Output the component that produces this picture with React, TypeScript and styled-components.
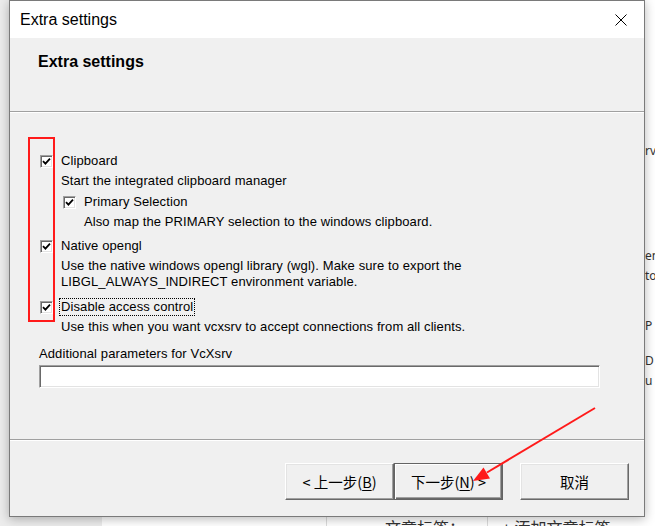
import styled, { createGlobalStyle } from "styled-components";

const GlobalStyle = createGlobalStyle`
  html, body {
    margin: 0;
    padding: 0;
  }
  body {
    font-family: "Liberation Sans", Arial, sans-serif;
    background: #ffffff;
  }
`;

const Root = styled.div`
  position: relative;
  width: 655px;
  height: 526px;
  overflow: hidden;
`;

// the web page behind the dialog
const BackPage = styled.div`
  display: grid;
  grid-template-columns: 102px 1fr;
  grid-template-rows: 517px 9px;
  height: 100%;
`;

const SideCell = styled.div`
  background: #ececec;
`;

const PageCell = styled.div`
  background: #ffffff;
  overflow: hidden;
  display: flex;
  flex-direction: column;
  padding-left: 543px;
  font-family: "Noto Sans", sans-serif;
  font-size: 12px;
  color: #333;
  white-space: nowrap;
`;

const Fragment = styled.div<{ $top: number }>`
  margin-top: ${(p) => p.$top}px;
  line-height: 18px;
`;

const TagRow = styled.div`
  background: #ffffff;
  display: flex;
  font-family: "Noto Sans CJK SC", sans-serif;
  font-size: 16px;
  line-height: 16px;
  color: #333;
  white-space: nowrap;
  overflow: hidden;
`;

const TagCell = styled.div<{ $width: number; $pad: number; $line?: boolean }>`
  width: ${(p) => p.$width}px;
  flex-shrink: 0;
  padding-left: ${(p) => p.$pad}px;
  padding-top: 2px;
  border-left: 1px solid ${(p) => (p.$line ? "#dcdcdc" : "transparent")};
  box-sizing: border-box;
`;

const Dialog = styled.div`
  position: absolute;
  left: 9px;
  top: 0;
  width: 636px;
  height: 517px;
  box-sizing: border-box;
  border: 1px solid #7a7a7a;
  background: #f0f0f0;
  display: flex;
  flex-direction: column;
  box-shadow: 0 2px 10px rgba(0, 0, 0, 0.28);
`;

const TitleBar = styled.div`
  height: 37px;
  flex-shrink: 0;
  background: #ffffff;
  display: flex;
  align-items: center;
  justify-content: space-between;
  padding-left: 10px;
  font-size: 16px;
  color: #000;
`;

const CloseButton = styled.div`
  width: 46px;
  height: 37px;
  display: flex;
  align-items: center;
  justify-content: center;
`;

const Header = styled.div`
  height: 73px;
  flex-shrink: 0;
  box-sizing: border-box;
  padding: 15px 0 0 28px;
  font-size: 16px;
  font-weight: bold;
  line-height: 18px;
  color: #000;
`;

const Separator = styled.div`
  flex-shrink: 0;
  border-top: 1px solid #a0a0a0;
  border-bottom: 1px solid #ffffff;
`;

const Content = styled.div`
  flex: 1;
  display: flex;
  flex-direction: column;
  padding: 38px 0 0 30px;
  font-size: 13px;
  letter-spacing: 0.1px;
  color: #000;
`;

const Options = styled.div`
  display: flex;
  flex-direction: column;
  gap: 6px;
`;

const Option = styled.div<{ $nested?: boolean; $space?: number }>`
  display: flex;
  flex-direction: column;
  margin-left: ${(p) => (p.$nested ? 23 : 0)}px;
  margin-top: ${(p) => (p.$nested ? 3 : p.$space ?? 0)}px;
`;

const CheckRow = styled.div`
  display: flex;
  align-items: center;
  height: 20px;
  gap: 8px;
`;

const Box = styled.span`
  width: 13px;
  height: 13px;
  flex-shrink: 0;
  box-sizing: border-box;
  background: #ffffff;
  border: 1px solid;
  border-color: #a0a0a0 #ffffff #ffffff #a0a0a0;
  box-shadow: inset 1px 1px 0 #696969, inset -1px -1px 0 #e3e3e3;
  display: flex;
  align-items: center;
  justify-content: center;
`;

const Label = styled.span<{ $focused?: boolean }>`
  line-height: 16px;
  padding: 0 1px;
  margin-left: -1px;
  outline: ${(p) => (p.$focused ? "1px dotted #000" : "none")};
`;

const Desc = styled.div`
  padding-left: 21px;
  margin-top: 2px;
  line-height: 16px;
  white-space: nowrap;
`;

const ParamsLabel = styled.div`
  margin: 11px 0 0 -1px;
  line-height: 16px;
`;

const ParamsInput = styled.div`
  margin: 3px 0 0 -1px;
  width: 561px;
  height: 23px;
  box-sizing: border-box;
  background: #ffffff;
  border: 1px solid;
  border-color: #a0a0a0 #ffffff #ffffff #a0a0a0;
  box-shadow: inset 1px 1px 0 #696969, inset -1px -1px 0 #e3e3e3;
`;

const ButtonRow = styled.div`
  flex-shrink: 0;
  display: flex;
  justify-content: flex-end;
  padding: 22px 15px 16px 0;
`;

const Button = styled.div<{ $default?: boolean; $gap?: number }>`
  width: 109px;
  height: 37px;
  box-sizing: border-box;
  margin-left: ${(p) => p.$gap ?? 0}px;
  display: flex;
  align-items: center;
  justify-content: center;
  background: #f0f0f0;
  font-family: "Noto Sans CJK SC", "Liberation Sans", sans-serif;
  font-size: 14.5px;
  color: #000;
  white-space: pre;
  border: 1px solid;
  border-color: ${(p) =>
    p.$default ? "#646464" : "#ffffff #696969 #696969 #ffffff"};
  box-shadow: ${(p) =>
    p.$default
      ? "inset 1px 1px 0 #ffffff, inset -1px -1px 0 #696969, inset -2px -2px 0 #a0a0a0"
      : "inset -1px -1px 0 #a0a0a0, inset 1px 1px 0 #e3e3e3"};

  u {
    text-underline-offset: 2px;
  }
`;

const Highlight = styled.div`
  position: absolute;
  left: 18px;
  top: 136px;
  width: 27px;
  height: 185px;
  box-sizing: border-box;
  border: 2px solid #ff1a1a;
  pointer-events: none;
`;

const ArrowLayer = styled.svg`
  position: absolute;
  left: 0;
  top: 0;
  pointer-events: none;
`;

const Check = () => (
  <svg width="9" height="9" viewBox="0 0 9 9">
    <path d="M1 4.2 L3.4 6.6 L8 1.6" fill="none" stroke="#000" strokeWidth="1.8" />
  </svg>
);

const CheckItem = ({
  label,
  focused,
}: {
  label: string;
  focused?: boolean;
}) => (
  <CheckRow>
    <Box>
      <Check />
    </Box>
    <Label $focused={focused}>{label}</Label>
  </CheckRow>
);

const App = () => {
  return (
    <Root>
      <GlobalStyle />
      <BackPage>
        <SideCell />
        <PageCell>
          <Fragment $top={142}>rv</Fragment>
          <Fragment $top={87}>en</Fragment>
          <Fragment $top={2}>to</Fragment>
          <Fragment $top={32}>P</Fragment>
          <Fragment $top={17}>D</Fragment>
          <Fragment $top={2}>u</Fragment>
        </PageCell>
        <SideCell />
        <TagRow>
          <TagCell $width={224} $pad={0} />
          <TagCell $width={161} $pad={58} $line>
            文章标签：
          </TagCell>
          <TagCell $width={200} $pad={14} $line>
            + 添加文章标签
          </TagCell>
        </TagRow>
      </BackPage>

      <Dialog>
        <TitleBar>
          <span>Extra settings</span>
          <CloseButton>
            <svg width="12" height="12" viewBox="0 0 12 12">
              <path d="M0.5 0.5 L11.5 11.5 M11.5 0.5 L0.5 11.5" stroke="#000" strokeWidth="1" />
            </svg>
          </CloseButton>
        </TitleBar>
        <Header>Extra settings</Header>
        <Separator />
        <Content>
          <Options>
            <Option>
              <CheckItem label="Clipboard" />
              <Desc>Start the integrated clipboard manager</Desc>
              <Option $nested>
                <CheckItem label="Primary Selection" />
                <Desc>Also map the PRIMARY selection to the windows clipboard.</Desc>
              </Option>
            </Option>
            <Option>
              <CheckItem label="Native opengl" />
              <Desc>
                Use the native windows opengl library (wgl). Make sure to export the
                <br />
                LIBGL_ALWAYS_INDIRECT environment variable.
              </Desc>
            </Option>
            <Option $space={1}>
              <CheckItem label="Disable access control" focused />
              <Desc>Use this when you want vcxsrv to accept connections from all clients.</Desc>
            </Option>
          </Options>
          <ParamsLabel>Additional parameters for VcXsrv</ParamsLabel>
          <ParamsInput />
        </Content>
        <Separator />
        <ButtonRow>
          <Button>
            {"< 上一步("}
            <u>B</u>)
          </Button>
          <Button $default>
            {"下一步("}
            <u>N</u>
            {") >"}
          </Button>
          <Button $gap={17}>取消</Button>
        </ButtonRow>
        <Highlight />
      </Dialog>

      <ArrowLayer width="655" height="526" viewBox="0 0 655 526">
        <line x1="595" y1="408" x2="487" y2="472.5" stroke="#ff1a1a" strokeWidth="2" />
        <polygon points="473,481 490,478.5 483.5,467.5" fill="#ff1a1a" />
      </ArrowLayer>
    </Root>
  );
};

export default App;
